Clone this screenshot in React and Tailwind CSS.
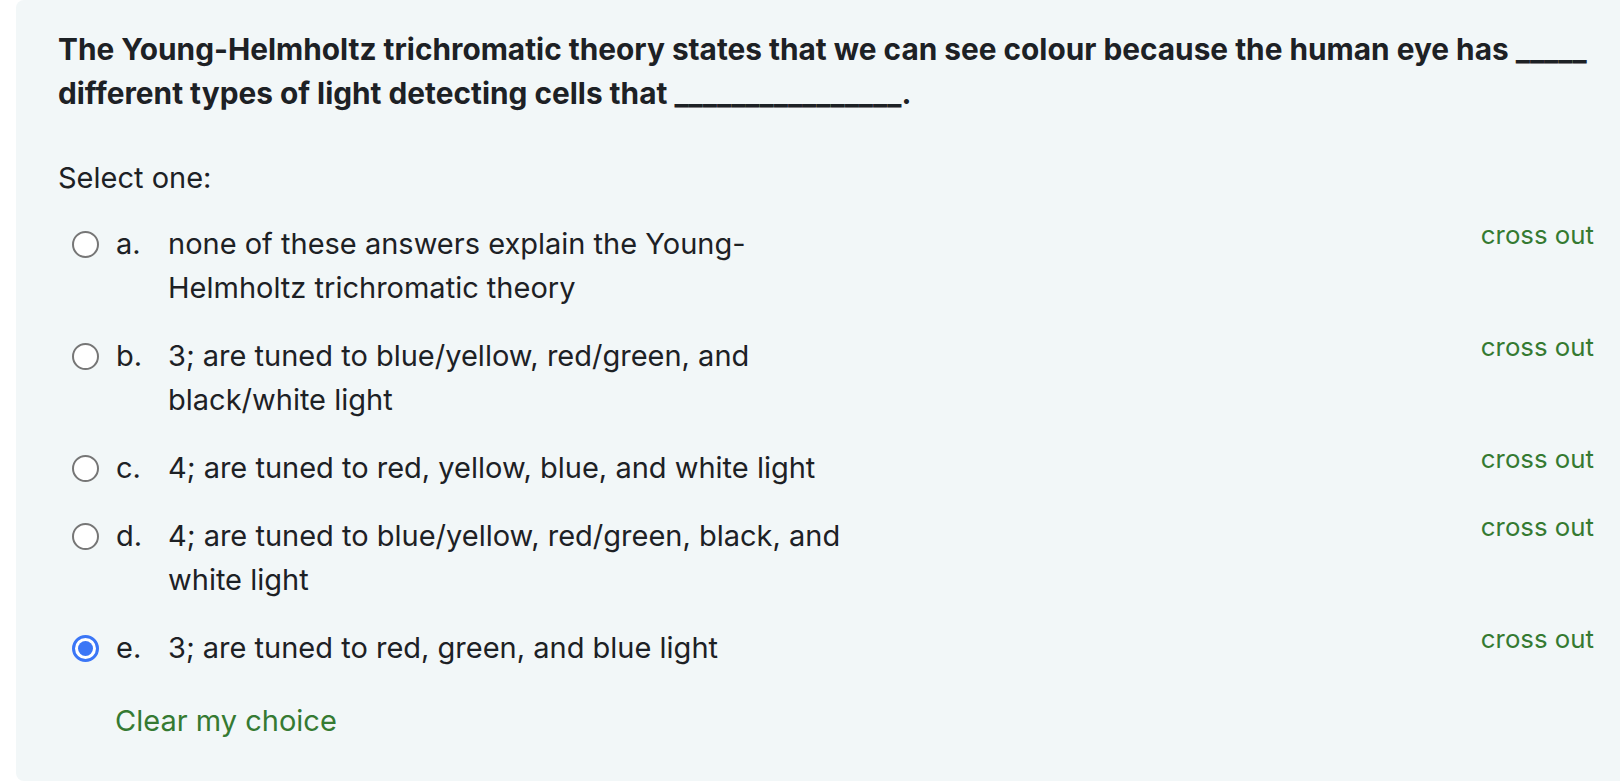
import React from 'react';

const options = [
  { key: 'a', text: 'none of these answers explain the Young-Helmholtz trichromatic theory' },
  { key: 'b', text: '3; are tuned to blue/yellow, red/green, and black/white light' },
  { key: 'c', text: '4; are tuned to red, yellow, blue, and white light' },
  { key: 'd', text: '4; are tuned to blue/yellow, red/green, black, and white light' },
  { key: 'e', text: '3; are tuned to red, green, and blue light', checked: true },
];

function Radio({ checked }) {
  if (checked) {
    return (
      <span className="w-[27px] h-[27px] rounded-full border-[3px] border-[#3b76f6] bg-white flex items-center justify-center shrink-0">
        <span className="w-[15px] h-[15px] rounded-full bg-[#3b76f6]"></span>
      </span>
    );
  }
  return <span className="w-[27px] h-[27px] rounded-full border-2 border-[#767676] bg-white shrink-0"></span>;
}

export default function App() {
  return (
    <div
      className="w-[1620px] h-[784px] bg-white overflow-hidden text-[#1d2125]"
      style={{ fontFamily: 'Inter, "Noto Sans", sans-serif' }}
    >
      <div className="ml-4 w-[1640px] bg-[#f2f7f8] rounded-lg pl-[42px] pt-[27px] pb-[38px]">
        <div className="w-[1540px]">
          {/* Question text */}
          <p className="text-[29.8px] font-bold leading-[44px]">
            The Young-Helmholtz trichromatic theory states that we can see colour because the human eye has _____
            different types of light detecting cells that ________________.
          </p>

          <p className="mt-[41px] text-[29px] leading-[44px]">Select one:</p>

          {/* Answers */}
          <div className="mt-[22px] flex flex-col gap-[24px]">
            {options.map((o) => (
              <div key={o.key} className="flex items-start justify-between w-[1536px]">
                <div className="flex items-start">
                  <div className="h-[44px] flex items-center pl-[14px]">
                    <Radio checked={o.checked} />
                  </div>
                  <span className="w-[52px] pl-[17px] text-[29px] leading-[44px] shrink-0 box-content">{o.key}.</span>
                  <span className="w-[690px] text-[29px] leading-[44px]">{o.text}</span>
                </div>
                <span className="text-[25.8px] leading-[26px] text-[#357a32]">cross out</span>
              </div>
            ))}
          </div>

          <div className="mt-[29px] pl-[57px] text-[29px] leading-[44px] text-[#357a32]">Clear my choice</div>
        </div>
      </div>
    </div>
  );
}
